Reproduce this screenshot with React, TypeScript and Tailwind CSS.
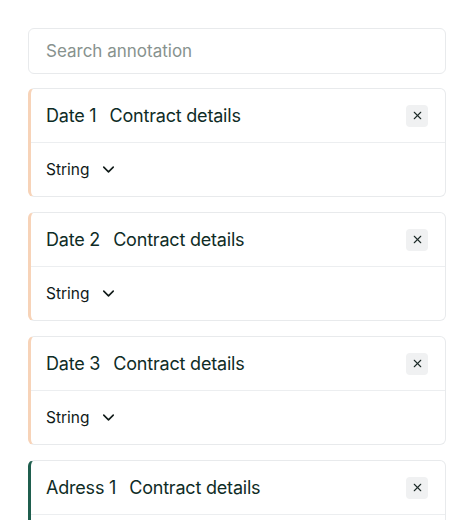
import { X, ChevronDown } from 'lucide-react'

const items = [
  { label: 'Date 1', accent: 'border-l-[#f7d3b8]' },
  { label: 'Date 2', accent: 'border-l-[#f7d3b8]' },
  { label: 'Date 3', accent: 'border-l-[#f7d3b8]' },
  { label: 'Adress 1', accent: 'border-l-[#1f5e4e]' },
]

const App = () => {
  return (
    <div className="h-screen overflow-hidden bg-white px-7 pt-7 font-['Inter',sans-serif] text-[#0f2c26]">
      {/* search */}
      <input
        className="w-full h-[46px] rounded-md border border-[#e8eaec] px-[17px] text-[17px] text-[#0f2c26] placeholder:text-[#87928e] outline-none"
        placeholder="Search annotation"
      />
      {/* cards */}
      <div className="mt-[14px] flex flex-col gap-[15px]">
        {items.map((item) => (
          <div
            key={item.label}
            className={`rounded-md border border-[#e8eaec] border-l-[3px] ${item.accent}`}
          >
            <div className="flex h-[54px] items-center justify-between border-b border-[#eceef0] pl-[15px] pr-[17px]">
              <div className="flex items-center gap-[13px] text-[18px] tracking-[-0.2px]">
                <span>{item.label}</span>
                <span>Contract details</span>
              </div>
              <button className="flex h-[22px] w-[22px] items-center justify-center rounded bg-[#f0f1f2] text-[#1d2b28]">
                <X size={13} strokeWidth={2} />
              </button>
            </div>
            <div className="flex h-[53px] items-center gap-[9px] pl-[15px] text-[15.5px] text-[#101a18]">
              <span>String</span>
              <ChevronDown size={19} strokeWidth={2} />
            </div>
          </div>
        ))}
      </div>
    </div>
  )
}

export default App
